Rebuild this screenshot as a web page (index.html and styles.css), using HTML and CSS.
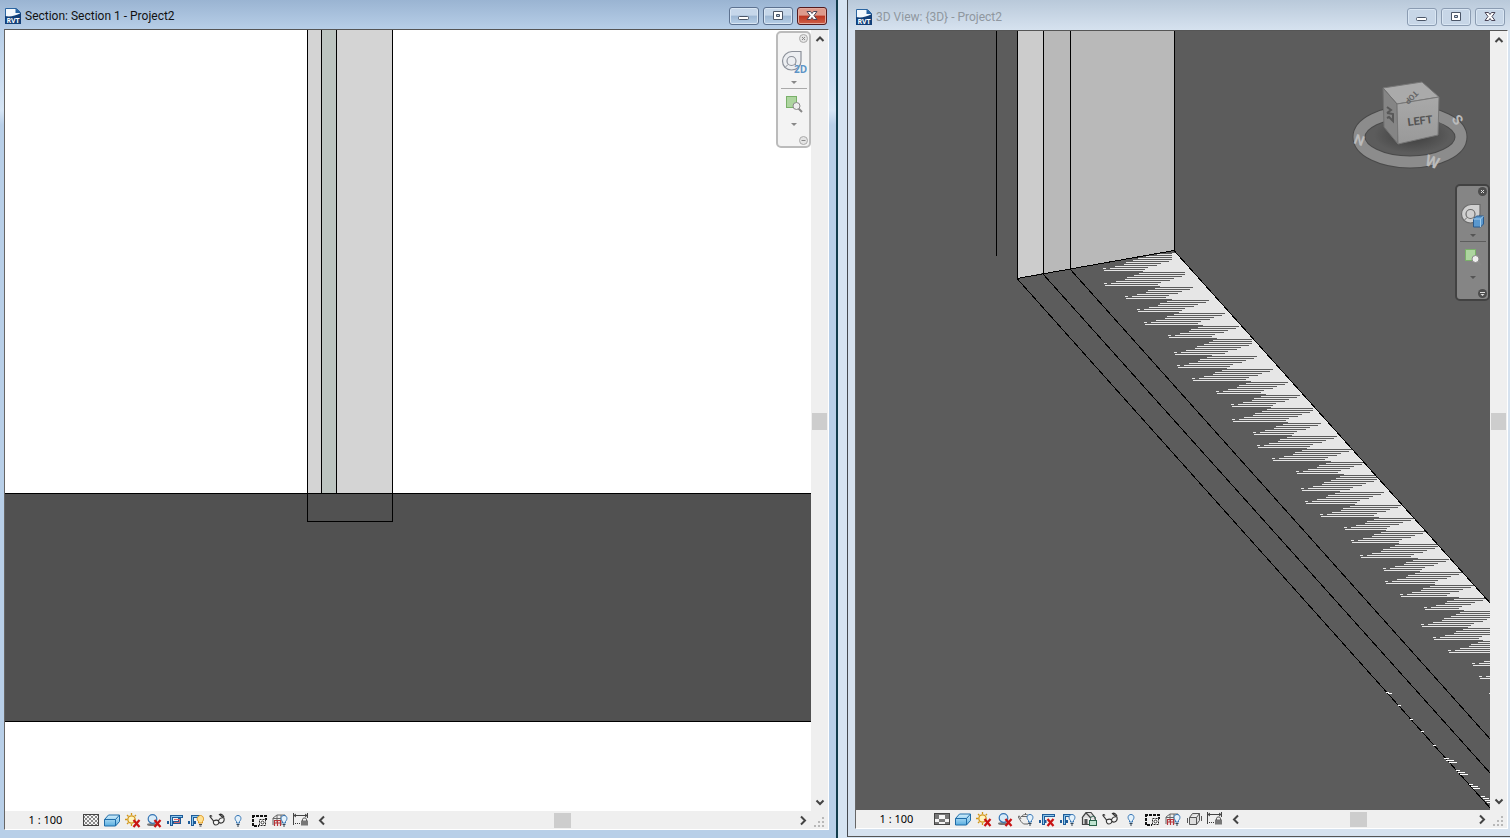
FILE: index.html
```html
<!DOCTYPE html>
<html lang="en">
<head>
<meta charset="utf-8">
<title>Project2</title>
<link rel="stylesheet" href="styles.css">
</head>
<body>
<svg class="defs" aria-hidden="true">
  <defs>
    <pattern id="chk" width="4" height="4" patternUnits="userSpaceOnUse"><rect width="4" height="4" fill="#f4f4f4"/><rect width="2" height="2" fill="#888"/><rect x="2" y="2" width="2" height="2" fill="#888"/></pattern>
    <linearGradient id="blue" x2="0" y2="1"><stop stop-color="#d3effc"/><stop offset="1" stop-color="#5aaee0"/></linearGradient>
    <linearGradient id="cubeF" x2="0" y2="1"><stop stop-color="#a9a9a9"/><stop offset="1" stop-color="#999"/></linearGradient>
    <radialGradient id="shade"><stop stop-color="#3c3c3c"/><stop offset="1" stop-color="#5c5c5c"/></radialGradient>
    <symbol id="x" viewBox="0 0 16 16"><path d="M8.500 8l6 7M14.500 8l-6 7" stroke="#c81414" stroke-width="2.200" fill="none"/></symbol>
    <symbol id="bulb" viewBox="0 0 16 16"><path d="M6.500 11V9.500C4 7 5 3.500 8 3.500s4 3.500 1.500 6V11z" fill="#e4f2fc" stroke="#3474b4"/><path d="M6.500 12.500h3M7 14h2" stroke="#345"/></symbol>
    <symbol id="i-detail" viewBox="0 0 16 16"><rect x=".5" y="2.500" width="15" height="11" fill="url(#chk)" stroke="#444"/></symbol>
    <symbol id="i-coarse" viewBox="0 0 16 16"><rect x=".5" y="2.500" width="15" height="11" fill="#f4f4f4" stroke="#444"/><path d="M1 3h14v1H1zM1 4h4v4H1zM11 4h4v4h-4zM5 8h6v3H5zM1 11h4v2H1zM11 11h4v2h-4z" fill="#777"/></symbol>
    <symbol id="i-cube" viewBox="0 0 16 16"><path d="M.5 7.500L4.500 3h11v6.500L11.500 14H.5z" fill="url(#blue)" stroke="#1f6ca8"/><path d="M.5 7.500h11l4-4.500M11.500 7.500V14" fill="none" stroke="#1f6ca8"/></symbol>
    <symbol id="i-sun" viewBox="0 0 16 16"><circle cx="6.500" cy="7.500" r="3.700" fill="#fff4c0" stroke="#d29618" stroke-width="1.300"/><path d="M6.500 1v2M6.500 12v2M0 7.500h2M2 3l1.500 1.500M11 3L9.700 4.300M2 12l1.500-1.500" stroke="#d29618" stroke-width="1.300"/><use href="#x"/></symbol>
    <symbol id="i-shadow" viewBox="0 0 16 16"><ellipse cx="6.500" cy="12.500" rx="5.500" ry="1.500" fill="#777"/><circle cx="6.500" cy="7" r="4.300" fill="#d8ebf8" stroke="#3474b4" stroke-width="1.200"/><use href="#x"/></symbol>
    <symbol id="i-crop" viewBox="0 0 16 16"><path d="M0 10.500h2M4.500 14V4.500H16M4.500 10.500h8V5" fill="none" stroke="#1e5b98" stroke-width="3"/><path d="M4.500 13V4.500H15" fill="none" stroke="#8cc8ee"/><path d="M7 7.500h6M7 10.500h5.500V8" fill="none" stroke="#d66" stroke-width="1"/></symbol>
    <symbol id="i-cropshow" viewBox="0 0 16 16"><path d="M0 10.500h2M4.500 14V4.500H12M4.500 10.500H8" fill="none" stroke="#1e5b98" stroke-width="3"/><path d="M4.500 13V4.500H11" fill="none" stroke="#8cc8ee"/><path d="M10.500 11V9.500C8 7.500 9.500 3.500 12.500 3.500s4 4 2 6V11z" fill="#ffe091" stroke="#de961b"/><path d="M11 12.500h3M11.500 14h2" stroke="#444"/></symbol>
    <symbol id="i-cropblue" viewBox="0 0 16 16"><path d="M0 10.500h2M4.500 14V4.500H11M4.500 10.500H8" fill="none" stroke="#1e5b98" stroke-width="3"/><path d="M4.500 13V4.500H10" fill="none" stroke="#8cc8ee"/><use href="#bulb" x="4"/></symbol>
    <symbol id="i-cropx" viewBox="0 0 16 16"><path d="M0 10.500h2M4.500 14V4.500H16M4.500 10.500h3" fill="none" stroke="#1e5b98" stroke-width="3"/><path d="M4.500 13V4.500H15" fill="none" stroke="#8cc8ee"/><use href="#x"/></symbol>
    <symbol id="i-teapot" viewBox="0 0 16 16"><path d="M3 5.500h9v5l-2 2.500H5.500L3 10.500 0 5.500 1.500 5 3 8M4 5c1-2 6-2 7 0M7.500 2v2" fill="#eee" stroke="#666"/><use href="#bulb" x="4"/></symbol>
    <symbol id="i-lock3d" viewBox="0 0 16 16"><path d="M1.500 6l3.500-4.500h5l4 5v2M1.500 6v7.500H8M5 1.500l4 5M1 7l4-5 5 5" fill="#ddd" stroke="#444" stroke-width="1.200"/><path d="M3.500 8h3v5.500h-3z" fill="#555"/><path d="M9.500 9V7.500c0-3 5-3 5 0V9" fill="none" stroke="#365"/><rect x="8.500" y="9.500" width="7" height="5" fill="#bfe3d0" stroke="#286048"/></symbol>
    <symbol id="i-glasses" viewBox="0 0 16 16"><path d="M4.500 9L1 4.500c0-1.500 1.500-1 2 0M14.500 6L10.500 2.500c1.500-1 3 0 4.500 2.500" fill="none" stroke="#333" stroke-width="1.200"/><path d="M4.500 9c2-1 4-1 5 0 1 2-.5 4-2.500 4s-3-2-2.500-4zM9.500 8.500c1-2 3.500-3 5.500-2.500.5 2.500-.5 4.500-2.500 5s-3-1-3-2.500z" fill="#f4f4f4" stroke="#333" stroke-width="1.100"/></symbol>
    <symbol id="i-temp" viewBox="0 0 16 16"><path d="M1 4h14v4M2 3v11h6" fill="none" stroke="#111" stroke-width="2" stroke-dasharray="3 1"/><rect x="8.500" y="7.500" width="6" height="6" fill="#fff" stroke="#222" stroke-dasharray="2 1"/><circle cx="11.500" cy="10.500" r="1.500" fill="none" stroke="#333"/></symbol>
    <symbol id="i-analytic" viewBox="0 0 16 16"><path d="M1 13V6l4-3h8v6M1 6.500h9L13 3M5 3v8M9 3v10" fill="none" stroke="#666"/><path d="M2.500 14V8.500h6V14M5.500 8.500V14M2.500 11h6" fill="none" stroke="#b8343a" stroke-width="1.200"/><use href="#bulb" x="4"/></symbol>
    <symbol id="i-sets" viewBox="0 0 16 16"><path d="M3.500 6.500l3-4h7v7l-3 4h-7zM3.500 6.500h7l3-4M10.500 6.500v7" fill="#ddd" stroke="#555"/><path d="M1.500 7v5M15.500 5v5" stroke="#555"/></symbol>
    <symbol id="i-constr" viewBox="0 0 16 16"><path d="M.5 1v12M14.500 1v5M1 3.500h13M3 2L1 3.500 3 5M12 2l2 1.500L12 5" fill="none" stroke="#444"/><path d="M2 11.500h6" stroke="#333" stroke-dasharray="1 1"/><path d="M9.500 9V7.500c0-2 4-2 4 0V9" fill="none" stroke="#444"/><rect x="8" y="8.500" width="7" height="5" fill="#777"/></symbol>
    <symbol id="i-left" viewBox="0 0 16 16"><path d="M10 4.500L6 8.500l4 4" fill="none" stroke="#444" stroke-width="2"/></symbol>
    <symbol id="i-right" viewBox="0 0 16 16"><path d="M7 4.500l4 4-4 4" fill="none" stroke="#444" stroke-width="2"/></symbol>
    <symbol id="i-up" viewBox="0 0 16 16"><path d="M4.500 10L8 6.500l3.500 3.500" fill="none" stroke="#444" stroke-width="2"/></symbol>
    <symbol id="i-down" viewBox="0 0 16 16"><path d="M4.500 6.500L8 10l3.500-3.500" fill="none" stroke="#444" stroke-width="2"/></symbol>
    <symbol id="i-grip" viewBox="0 0 16 16"><path d="M10 5h2v2h-2zM6 9h2v2H6zM10 9h2v2h-2zM2 13h2v2H2zM6 13h2v2H6zM10 13h2v2h-2z" fill="#b8b8b8"/></symbol>
    <symbol id="rvt" viewBox="0 0 16 16"><path d="M.5 10V.5h11l4 4V10z" fill="#f3f8fd" stroke="#2b65a0"/><path d="M10.500 0v5H16z" fill="#2460a0"/><path d="M0 8c5 1 10 0 16-3v11H0z" fill="#123f78"/><text x="8" y="15" text-anchor="middle" class="rvt-text">RVT</text></symbol>
    <symbol id="w-min" viewBox="0 0 16 16"><rect x="2.500" y="8.500" width="10" height="3" rx="1" fill="#fff" stroke="#4b5668"/></symbol>
    <symbol id="w-max" viewBox="0 0 16 16"><path d="M3.500 3.500h9v8h-9zM6.500 6.500v2h3v-2z" fill="#fff" fill-rule="evenodd" stroke="#4b5668"/></symbol>
    <symbol id="w-close" viewBox="0 0 16 16"><path d="M3 3.500h3.500L8 5.500l1.500-2H13L10 7.500l3 4H9.500L8 9.500l-1.500 2H3l3-4z" fill="#fff" stroke="#4b4658"/></symbol>
    <symbol id="tri" viewBox="0 0 6 4"><path d="M0 0h6L3 3z" fill="currentColor"/></symbol>
    <symbol id="zoom" viewBox="0 0 18 18"><rect x="1.500" y="1.500" width="10" height="11" fill="#add59f" stroke="#79b069"/><path d="M13 13l4 4" stroke="#888" stroke-width="2"/><circle cx="11.500" cy="11" r="3.500" fill="#eee" stroke="#888"/></symbol>
    <symbol id="wheel" viewBox="0 0 26 26"><path d="M11 1.500h9V11c0 5-4 9-9.500 9S1.500 16 1.500 11 6 1.500 11 1.500z" fill="var(--w)" stroke="var(--s)" stroke-width="1.200"/><circle cx="10.500" cy="11" r="4.500" fill="var(--w)" stroke="var(--s)" stroke-width="1.200"/><path d="M7 14.500l-3 3M14 14l2 2" stroke="var(--s)"/></symbol>
  </defs>
</svg>
<main class="desk">
  <section class="window active">
    <header class="title">
      <svg class="ic"><use href="#rvt"/></svg><h1>Section: Section 1 - Project2</h1>
      <button aria-label="Minimize"><svg class="ic"><use href="#w-min"/></svg></button>
      <button aria-label="Maximize"><svg class="ic"><use href="#w-max"/></svg></button>
      <button class="close" aria-label="Close"><svg class="ic"><use href="#w-close"/></svg></button>
    </header>
    <div class="body">
      <div class="canvas">
        <svg class="scene" shape-rendering="crispEdges" role="img" aria-label="Section through wall and floor">
          <rect width="100%" height="100%" fill="#fff"/>
          <rect y="463" width="100%" height="229" fill="#515151"/>
          <rect x="302" width="86" height="463" fill="#d4d4d4"/>
          <rect x="316" width="16" height="463" fill="#bcc4c0"/>
          <path d="M0 463.500H302M388 463.500H3000M0 691.500H3000M302.500 0v491.500h85V0M316.500 0v463M331.500 0v463M302 463.500h86" fill="none" stroke="#000"/>
        </svg>
        <nav class="navbar light">
          <button class="dot" aria-label="Close bar"><svg viewBox="0 0 9 9"><circle cx="4.500" cy="4.500" r="4" fill="#e4e4e4" stroke="#aaa"/><path d="M3 3l3 3M6 3L3 6" stroke="#888"/></svg></button>
          <button class="big" aria-label="2D wheel"><svg viewBox="0 0 26 26"><use href="#wheel"/><text x="13" y="23" class="twod">2D</text></svg></button>
          <button class="arrow" aria-label="Wheel options"><svg><use href="#tri"/></svg></button>
          <hr>
          <button class="zoomb" aria-label="Zoom region"><svg><use href="#zoom"/></svg></button>
          <button class="arrow" aria-label="Zoom options"><svg><use href="#tri"/></svg></button>
          <button class="dot last" aria-label="Customize"><svg viewBox="0 0 9 9"><circle cx="4.500" cy="4.500" r="4" fill="#e4e4e4" stroke="#aaa"/><path d="M2.500 4.500h4" stroke="#888"/></svg></button>
        </nav>
      </div>
      <div class="vscroll">
        <button aria-label="Scroll up"><svg class="ic"><use href="#i-up"/></svg></button><span class="space a"></span><span class="thumb"></span><span class="space b"></span><button aria-label="Scroll down"><svg class="ic"><use href="#i-down"/></svg></button>
      </div>
      <div class="status">
        <button class="scale">1 : 100</button>
        <button aria-label="Detail level"><svg class="ic"><use href="#i-detail"/></svg></button>
        <button aria-label="Visual style"><svg class="ic"><use href="#i-cube"/></svg></button>
        <button aria-label="Sun path"><svg class="ic"><use href="#i-sun"/></svg></button>
        <button aria-label="Shadows"><svg class="ic"><use href="#i-shadow"/></svg></button>
        <button aria-label="Crop view"><svg class="ic"><use href="#i-crop"/></svg></button>
        <button aria-label="Show crop region"><svg class="ic"><use href="#i-cropshow"/></svg></button>
        <button aria-label="Hide or isolate"><svg class="ic"><use href="#i-glasses"/></svg></button>
        <button aria-label="Reveal hidden"><svg class="ic"><use href="#bulb"/></svg></button>
        <button aria-label="Temporary view"><svg class="ic"><use href="#i-temp"/></svg></button>
        <button aria-label="Analytical model"><svg class="ic"><use href="#i-analytic"/></svg></button>
        <button aria-label="Constraints"><svg class="ic"><use href="#i-constr"/></svg></button>
        <button aria-label="Scroll left"><svg class="ic"><use href="#i-left"/></svg></button>
        <span class="space a"></span><span class="thumb"></span><span class="space b"></span>
        <button aria-label="Scroll right"><svg class="ic"><use href="#i-right"/></svg></button>
        <svg class="ic"><use href="#i-grip"/></svg>
      </div>
    </div>
  </section>
  <section class="window idle">
    <header class="title">
      <svg class="ic"><use href="#rvt"/></svg><h1>3D View: {3D} - Project2</h1>
      <button aria-label="Minimize"><svg class="ic"><use href="#w-min"/></svg></button>
      <button aria-label="Maximize"><svg class="ic"><use href="#w-max"/></svg></button>
      <button aria-label="Close"><svg class="ic"><use href="#w-close"/></svg></button>
    </header>
    <div class="body">
      <div class="canvas">
        <svg class="scene" shape-rendering="crispEdges" role="img" aria-label="3D view of wall over floor">
          <rect width="100%" height="100%" fill="#5c5c5c"/>
          <path d="M161 0h26v242l-26 6z" fill="#ccc"/>
          <path d="M187 0h131v219l-131 24z" fill="#b9b9b9"/>
          <path id="overlap" fill="#e6e6e6"/>
          <path d="M140.500 0v225M161.500 0v248M187.500 0v243M214.500 0v238M318.500 0v219M161 247.500l157-28L635 573M161 247.500L635 778M187 243l448 500M214 238l421 471" fill="none" stroke="#000"/>
          <path d="M530 661.500h3M532 662.500h4M542 674.500h3M554 688.500h3M565 700.500h3M577 714.500h3M588 727.500h5M590 729.500h8M593 731.500h8M600 739.500h4M602 741.500h7M604 743.500h8M613 753.500h4M615 755.500h7M617 757.500h7M625 765.500h4M627 767.500h6M629 769.500h6M631 771.500h4" stroke="#fff"/>
        </svg>
        <svg class="viewcube" viewBox="0 0 120 94" role="img" aria-label="View cube">
          <ellipse cx="60" cy="59" rx="51" ry="25" fill="none" stroke="#4a4a4a" stroke-width="13"/>
          <ellipse cx="60" cy="59" rx="51" ry="25" fill="none" stroke="#8c8c8c" stroke-width="11"/>
          <ellipse cx="62" cy="57" rx="38" ry="18" fill="url(#shade)"/>
          <path d="M33 10L72 4l17 15-42 7z" fill="#aaa" stroke="#777"/>
          <path d="M33 10l14 16 1 40-14-17z" fill="#858585" stroke="#707070"/>
          <path d="M47 26l42-7-1 38-40 9z" fill="url(#cubeF)" stroke="#777"/>
          <text x="58" y="48" transform="rotate(-7 58 48)" class="face">LEFT</text>
          <text x="65" y="12" transform="rotate(135 65 12)" class="faces">TOP</text>
          <path d="M37 29l4 3-4 3M37 35l6 1v7l-4-4-2 1" fill="none" stroke="#585858" stroke-width="2"/>
          <text x="3" y="65" transform="rotate(20 3 65)" class="compass">N</text>
          <text x="74" y="87" transform="rotate(18 74 87)" class="compass big-letter">W</text>
          <text x="101" y="41" transform="rotate(55 101 41)" class="compass">S</text>
        </svg>
        <nav class="navbar dark">
          <button class="dot" aria-label="Close bar"><svg viewBox="0 0 9 9"><circle cx="4.500" cy="4.500" r="4.500" fill="#4d4d4d"/><path d="M3 3l3 3M6 3L3 6" stroke="#ddd"/></svg></button>
          <button class="big" aria-label="Full wheel"><svg viewBox="0 0 26 26"><use href="#wheel"/><path d="M13.500 16l3-3h7v8l-3 3h-7z" fill="#5a98ce" stroke="#2a5a8c"/><path d="M13.500 16h7l3-3M20.500 16v8" fill="none" stroke="#a2ccec"/></svg></button>
          <button class="arrow" aria-label="Wheel options"><svg><use href="#tri"/></svg></button>
          <hr>
          <button class="zoomb" aria-label="Zoom region"><svg><use href="#zoom"/></svg></button>
          <button class="arrow" aria-label="Zoom options"><svg><use href="#tri"/></svg></button>
          <button class="dot last" aria-label="Customize"><svg viewBox="0 0 9 9"><circle cx="4.500" cy="4.500" r="4.500" fill="#4d4d4d"/><path d="M2 3.500h5" stroke="#ddd"/><path d="M2.500 5h4l-2 2z" fill="#ddd"/></svg></button>
        </nav>
      </div>
      <div class="vscroll">
        <button aria-label="Scroll up"><svg class="ic"><use href="#i-up"/></svg></button><span class="space a"></span><span class="thumb"></span><span class="space b"></span><button aria-label="Scroll down"><svg class="ic"><use href="#i-down"/></svg></button>
      </div>
      <div class="status">
        <button class="scale">1 : 100</button>
        <button aria-label="Detail level"><svg class="ic"><use href="#i-coarse"/></svg></button>
        <button aria-label="Visual style"><svg class="ic"><use href="#i-cube"/></svg></button>
        <button aria-label="Sun path"><svg class="ic"><use href="#i-sun"/></svg></button>
        <button aria-label="Shadows"><svg class="ic"><use href="#i-shadow"/></svg></button>
        <button aria-label="Rendering"><svg class="ic"><use href="#i-teapot"/></svg></button>
        <button aria-label="Crop view"><svg class="ic"><use href="#i-cropx"/></svg></button>
        <button aria-label="Show crop region"><svg class="ic"><use href="#i-cropblue"/></svg></button>
        <button aria-label="Lock 3D view"><svg class="ic"><use href="#i-lock3d"/></svg></button>
        <button aria-label="Hide or isolate"><svg class="ic"><use href="#i-glasses"/></svg></button>
        <button aria-label="Reveal hidden"><svg class="ic"><use href="#bulb"/></svg></button>
        <button aria-label="Temporary view"><svg class="ic"><use href="#i-temp"/></svg></button>
        <button aria-label="Analytical model"><svg class="ic"><use href="#i-analytic"/></svg></button>
        <button aria-label="Displacement sets"><svg class="ic"><use href="#i-sets"/></svg></button>
        <button aria-label="Constraints"><svg class="ic"><use href="#i-constr"/></svg></button>
        <button aria-label="Scroll left"><svg class="ic"><use href="#i-left"/></svg></button>
        <span class="space a"></span><span class="thumb"></span><span class="space b"></span>
        <button aria-label="Scroll right"><svg class="ic"><use href="#i-right"/></svg></button>
        <svg class="ic"><use href="#i-grip"/></svg>
      </div>
    </div>
  </section>
</main>
<script src="scene.js"></script>
</body>
</html>
```
FILE: styles.css
```css
* { box-sizing: border-box; }
body { margin: 0; background: #dce8f4; font-family: Roboto, "Open Sans", sans-serif; }
button { border: 0; padding: 0; background: none; color: inherit; font: inherit; display: flex; align-items: center; justify-content: center; }
svg { display: block; flex: none; }
.defs { position: absolute; width: 0; height: 0; }
.ic { width: 16px; height: 16px; }
.rvt-text { font: 700 7px "Open Sans", sans-serif; fill: #fff; }

.desk { display: grid; grid-template-columns: 838fr 663fr; column-gap: 9px; height: 100vh; background: #d6e4f2; }
.window { display: flex; flex-direction: column; min-width: 0; }
.active { padding: 0 7px 8px 4px; border-right: 2px solid #123c4c; background: linear-gradient(#9ab4d2, #b8cfe8 30px, #d6e5f5 110px, #b8cfe8 125px); }
.idle { padding: 0 2px 7px 7px; margin-bottom: 1px; border-left: 1px solid #454a50; border-bottom: 1px solid #555; background: linear-gradient(#b9c9da, #d6e2ef 30px); }

.title { display: flex; align-items: center; gap: 4px; height: 29px; padding: 3px 2px 0 1px; }
.idle .title { height: 30px; padding: 4px 3px 0 1px; }
.title h1 { flex: 1; margin: 0; font-size: 12px; line-height: 16px; font-weight: 400; color: #111; }
.idle h1 { color: #8f979f; }
.title button { width: 30px; height: 18px; border: 1px solid #5d7290; border-radius: 3px; background: linear-gradient(#c6d7ea 45%, #9db7d3 50%, #b9d0e8); box-shadow: inset 0 0 0 1px #d9e6f3; }
.title .close { background: linear-gradient(#dd9a8c 45%, #bc3520 50%, #cf6048); border-color: #541b1e; box-shadow: inset 0 0 0 1px #e3a99d; }
.idle .title button { background: #c7d6e7; border-color: #8b9cb2; }

.body { flex: 1; min-height: 0; display: grid; grid-template-columns: 1fr 17px; grid-template-rows: 1fr 18px; border-top: 1px solid #555; border-left: 1px solid #666; background: #efefef; border-right: 1px solid #fff; border-bottom: 1px solid #fff; }
.canvas { position: relative; min-width: 0; overflow: hidden; }
.scene { width: 100%; height: 100%; }
.vscroll { display: flex; flex-direction: column; align-items: center; }
.vscroll button { width: 17px; height: 18px; }
.vscroll .thumb { width: 15px; height: 17px; background: #cdcdcd; }
.vscroll .a { flex: 365; }
.vscroll .b { flex: 364; }
.status { grid-column: 1 / 3; display: flex; align-items: center; }
.status button { width: 21px; height: 18px; }
.status .scale { width: 75px; padding-left: 6px; font: 11px/16px "Noto Sans", sans-serif; color: #000; }
.status .thumb { width: 17px; height: 15px; background: #cdcdcd; }
.status .a { flex: 224; }
.status .b { flex: 222; }
.idle .status .a { flex: 106; }
.idle .status .b { flex: 106; }

.navbar { position: absolute; right: 0; display: flex; flex-direction: column; align-items: center; width: 35px; height: 117px; padding: 1px 3px; border-radius: 5px; }
.light { top: 1px; background: #f3f3f3; border: 2px solid #bbb; color: #888; --w: #eceef1; --s: #8b9099; }
.dark { top: 153px; background: #858585; border: 2px solid #424242; color: #555; --w: #d0d0d0; --s: #6b6b6b; }
.dot { align-self: flex-end; width: 9px; height: 9px; margin-right: -2px; }
.dot svg { width: 9px; height: 9px; }
.big { margin-top: 7px; }
.big svg { width: 26px; height: 26px; }
.arrow { height: 4px; margin-top: 5px; }
.arrow svg { width: 6px; height: 4px; }
.navbar hr { width: 26px; margin: 3px 0 6px; border: 0; border-top: 1px solid #aaa; }
.dark hr { border-color: #5d5d5d; }
.zoomb svg { width: 18px; height: 18px; }
.zoomb + .arrow { margin-top: 10px; }
.last { margin-top: auto; }
.twod { font: 700 10px "Open Sans", sans-serif; fill: #5d93c6; }

.viewcube { position: absolute; top: 47px; right: 20px; width: 120px; height: 94px; }
.face { font: 700 11px Roboto, sans-serif; fill: #555; }
.faces { font: 700 8px Roboto, sans-serif; fill: #666; }
.compass { font: 700 14px Roboto, sans-serif; fill: #bbb; }
.big-letter { font-size: 16px; }
```
FILE: scene.js
```js
// Interleaved faces of wall and floor: each group is [left tip x, tip y, stripe right x].
const groups = [
  [248, 239, 316], [249, 254, 329], [270, 267, 337], [282, 280, 353], [289, 293, 369],
  [313, 306, 383], [319, 323, 396], [322, 336, 401], [337, 349, 417], [361, 362, 432],
  [376, 375, 444], [377, 390, 457], [398, 403, 465], [402, 416, 481], [417, 429, 496],
  [441, 442, 509], [446, 459, 521], [450, 472, 528], [465, 485, 545], [489, 498, 558],
  [496, 511, 570], [505, 526, 582], [528, 539, 593], [530, 552, 606], [545, 565, 618],
  [569, 578, 630], [566, 595, 642], [578, 608, 650], [593, 621, 662], [617, 634, 680], [624, 647, 690]
];
const tips = [0, 6, 11, 20, 22, 29, 34, 38, 42];
const ends = [27, 24, 15, 11, 3, 0, 0, 0, 0];
let d = "";
for (let y = 219; y <= 647; y++) {
  const g = groups.find(v => v[1] >= y);
  const n = g[1] - y;
  const j = n >> 1;
  const left = n % 2 ? g[2] - ends[j] : g[0] + tips[j];
  const start = Math.max(left, 161 + Math.ceil((248 - y) * 5.6));
  const end = Math.min(635, Math.round(318 + (y - 219) * 0.895));
  if (end > start) d += `M${start} ${y}H${end}v1H${start}z`;
  if (n === 2 && left - 9 > start - 20) d += `M${left - 7} ${y}h3v1h-3z`;
}
d += "M633 662h2v1h-2z";
document.getElementById("overlap").setAttribute("d", d);
```
